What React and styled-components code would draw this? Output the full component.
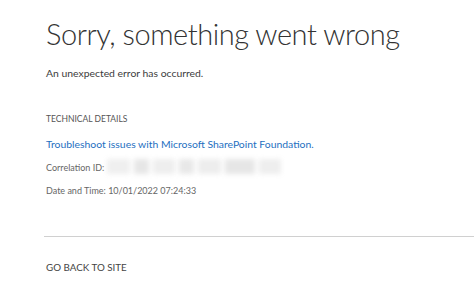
import styled, { createGlobalStyle } from "styled-components";

const GlobalStyle = createGlobalStyle`
  html, body {
    margin: 0;
    padding: 0;
    background: #ffffff;
  }
  body {
    font-family: Lato, "Open Sans", "Liberation Sans", sans-serif;
    color: #444444;
  }
`;

const Page = styled.main`
  width: 474px;
  height: 304px;
  overflow: hidden;
  box-sizing: border-box;
  padding: 16px 0 0 46px;
`;

const Title = styled.h1`
  margin: 0;
  font-size: 29px;
  line-height: 36px;
  font-weight: 300;
  letter-spacing: -0.45px;
  color: #333333;
  white-space: nowrap;
`;

const Lead = styled.p`
  margin: 14px 0 0;
  font-size: 10.4px;
  line-height: 14px;
  color: #3c3c3c;
`;

const SectionLabel = styled.div`
  margin-top: 33px;
  font-size: 8.5px;
  line-height: 12px;
  text-transform: uppercase;
  color: #555555;
`;

const HelpLink = styled.a`
  display: block;
  margin-top: 12px;
  font-size: 10.4px;
  line-height: 14px;
  color: #1e6fbf;
  text-decoration: none;
`;

const DetailRow = styled.div`
  display: flex;
  align-items: flex-end;
  margin-top: ${(p) => p.$gap}px;
  font-size: 9px;
  line-height: 12px;
  color: #666666;
`;

const Redacted = styled.span`
  display: flex;
  gap: 4px;
  width: 174px;
  height: 15px;
  margin-left: 3px;
  filter: blur(2.5px);
`;

const Smudge = styled.span`
  flex: ${(p) => p.$grow};
  background: ${(p) => p.$shade};
`;

const Divider = styled.hr`
  margin: 39.5px 0 0 -2px;
  border: 0;
  border-top: 1px solid #d0d0d0;
`;

const BackLink = styled.a`
  display: block;
  margin-top: 23px;
  font-size: 9.8px;
  line-height: 14px;
  text-transform: uppercase;
  color: #444444;
  text-decoration: none;
`;

const smudges = [
  { grow: 3, shade: "#efefef" },
  { grow: 2, shade: "#e6e6e6" },
  { grow: 3, shade: "#eeeeee" },
  { grow: 2, shade: "#e8e8e8" },
  { grow: 3, shade: "#ededed" },
  { grow: 4, shade: "#e6e6e6" },
  { grow: 3, shade: "#eeeeee" },
];

export default function App() {
  return (
    <>
      <GlobalStyle />
      <Page>
        <Title>Sorry, something went wrong</Title>
        <Lead>An unexpected error has occurred.</Lead>
        <SectionLabel>Technical Details</SectionLabel>
        <HelpLink href="#">
          Troubleshoot issues with Microsoft SharePoint Foundation.
        </HelpLink>
        <DetailRow $gap={8}>
          Correlation ID:
          <Redacted>
            {smudges.map((s, i) => (
              <Smudge key={i} $grow={s.grow} $shade={s.shade} />
            ))}
          </Redacted>
        </DetailRow>
        <DetailRow $gap={10.5}>Date and Time: 10/01/2022 07:24:33</DetailRow>
        <Divider />
        <BackLink href="#">Go back to site</BackLink>
      </Page>
    </>
  );
}
